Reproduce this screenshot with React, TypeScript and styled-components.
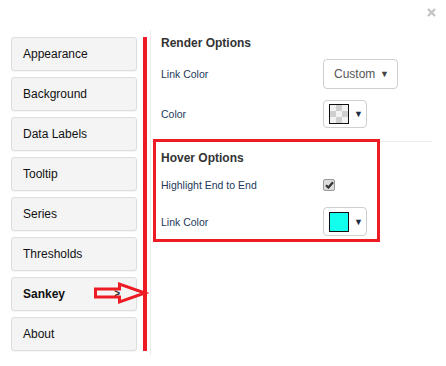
import styled, { createGlobalStyle } from "styled-components";

const GlobalStyle = createGlobalStyle`
  html, body {
    margin: 0;
    padding: 0;
    background: #ffffff;
  }
  body {
    font-family: "Liberation Sans", Arial, sans-serif;
  }
`;

const Dialog = styled.div`
  position: relative;
  width: 446px;
  height: 366px;
  display: flex;
  align-items: flex-start;
  overflow: hidden;
`;

const CloseButton = styled.button`
  position: absolute;
  top: 6px;
  right: 9px;
  width: 12px;
  height: 12px;
  padding: 0;
  border: none;
  background: none;
  display: flex;
  align-items: center;
  justify-content: center;
`;

const Nav = styled.nav`
  width: 126px;
  padding: 37px 7px 0 11px;
  display: flex;
  flex-direction: column;
  gap: 6px;
`;

const NavButton = styled.div<{ $active?: boolean }>`
  position: relative;
  height: 34px;
  box-sizing: border-box;
  display: flex;
  align-items: center;
  padding-left: 11px;
  background: #f4f4f4;
  border: 1px solid #dedede;
  border-radius: 3px;
  box-shadow: 0 1px 1px rgba(0, 0, 0, 0.04);
  font-size: 12px;
  color: #111;
  font-weight: ${(p) => (p.$active ? "bold" : "normal")};
`;

const Chevron = styled.span`
  position: absolute;
  right: 16px;
  top: 10px;
  font-size: 10px;
  font-weight: bold;
  color: #222;
`;

const Panel = styled.main`
  margin-top: 30px;
  margin-left: 6px;
  width: 281px;
  height: 325px;
  border-left: 1px solid #ececec;
`;

const Section = styled.section<{ $first?: boolean }>`
  padding: ${(p) => (p.$first ? "4px 0 13px 10px" : "7px 0 0 10px")};
  border-bottom: ${(p) => (p.$first ? "1px solid #ececec" : "none")};
`;

const Title = styled.h3`
  margin: 0;
  height: 18px;
  line-height: 18px;
  font-size: 12px;
  font-weight: bold;
  color: #333;
`;

const Row = styled.div<{ $h: number; $gap: number }>`
  display: grid;
  grid-template-columns: 162px auto;
  align-items: center;
  height: ${(p) => p.$h}px;
  margin-top: ${(p) => p.$gap}px;
`;

const Label = styled.label`
  font-size: 10.5px;
  color: #22395a;
`;

const Select = styled.div`
  width: 75px;
  height: 30px;
  box-sizing: border-box;
  border: 1px solid #cfcfcf;
  border-radius: 4px;
  display: flex;
  align-items: center;
  justify-content: space-between;
  padding: 0 8px 0 10px;
  font-size: 12px;
  color: #555;
`;

const Caret = styled.span<{ $dark?: boolean }>`
  font-size: 9px;
  color: ${(p) => (p.$dark ? "#1c2b44" : "#444")};
`;

const ColorButton = styled.div<{ $h: number }>`
  width: 44px;
  height: ${(p) => p.$h}px;
  box-sizing: border-box;
  border: 1px solid #cfcfcf;
  border-radius: 4px;
  display: flex;
  align-items: center;
  gap: 5px;
  padding-left: 5px;
`;

const Swatch = styled.span<{ $color?: string }>`
  width: 20px;
  height: 20px;
  box-sizing: border-box;
  border: 1px solid #111;
  background: ${(p) =>
    p.$color ||
    "repeating-conic-gradient(#cfcfcf 0% 25%, #f2f2f2 0% 50%) 0 0 / 12px 12px"};
`;

const CheckBox = styled.span`
  width: 12px;
  height: 12px;
  box-sizing: border-box;
  border: 1px solid #9a9a9a;
  border-radius: 2px;
  background: #dcdcdc;
  display: flex;
  align-items: center;
  justify-content: center;
`;

const Annotation = styled.div`
  position: absolute;
  pointer-events: none;
`;

const RedLine = styled(Annotation)`
  left: 143px;
  top: 37px;
  width: 4px;
  height: 314px;
  background: #ed1c24;
`;

const RedBox = styled(Annotation)`
  left: 153px;
  top: 139px;
  width: 227px;
  height: 103px;
  box-sizing: border-box;
  border: 3px solid #ed1c24;
`;

const ArrowBox = styled(Annotation)`
  left: 90px;
  top: 280px;
`;

const items = [
  "Appearance",
  "Background",
  "Data Labels",
  "Tooltip",
  "Series",
  "Thresholds",
  "Sankey",
  "About",
];

export default function App() {
  return (
    <>
      <GlobalStyle />
      <Dialog>
        <CloseButton aria-label="close">
          <svg width="9" height="9" viewBox="0 0 9 9">
            <path d="M1 1 L8 8 M8 1 L1 8" stroke="#c4c4c4" strokeWidth="2.4" />
          </svg>
        </CloseButton>

        <Nav>
          {items.map((item) => (
            <NavButton key={item} $active={item === "Sankey"}>
              {item}
              {item === "Sankey" && <Chevron>&gt;</Chevron>}
            </NavButton>
          ))}
        </Nav>

        <Panel>
          <Section $first>
            <Title>Render Options</Title>
            <Row $h={30} $gap={7}>
              <Label>Link Color</Label>
              <Select>
                Custom <Caret>▼</Caret>
              </Select>
            </Row>
            <Row $h={28} $gap={11}>
              <Label>Color</Label>
              <ColorButton $h={28}>
                <Swatch />
                <Caret $dark>▼</Caret>
              </ColorButton>
            </Row>
          </Section>

          <Section>
            <Title>Hover Options</Title>
            <Row $h={16} $gap={10}>
              <Label>Highlight End to End</Label>
              <CheckBox>
                <svg width="9" height="8" viewBox="0 0 9 8">
                  <path
                    d="M1 4.2 L3.4 6.5 L8 1.2"
                    fill="none"
                    stroke="#333"
                    strokeWidth="2.2"
                  />
                </svg>
              </CheckBox>
            </Row>
            <Row $h={29} $gap={14}>
              <Label>Link Color</Label>
              <ColorButton $h={29}>
                <Swatch $color="#12ffee" />
                <Caret $dark>▼</Caret>
              </ColorButton>
            </Row>
          </Section>
        </Panel>

        <RedLine />
        <RedBox />
        <ArrowBox>
          <svg width="60" height="26" viewBox="0 0 60 26">
            <polygon
              points="5.5,9 29.5,9 29.5,4 55,13 29.5,22 29.5,17 5.5,17"
              fill="none"
              stroke="#ed1c24"
              strokeWidth="3"
            />
          </svg>
        </ArrowBox>
      </Dialog>
    </>
  );
}
